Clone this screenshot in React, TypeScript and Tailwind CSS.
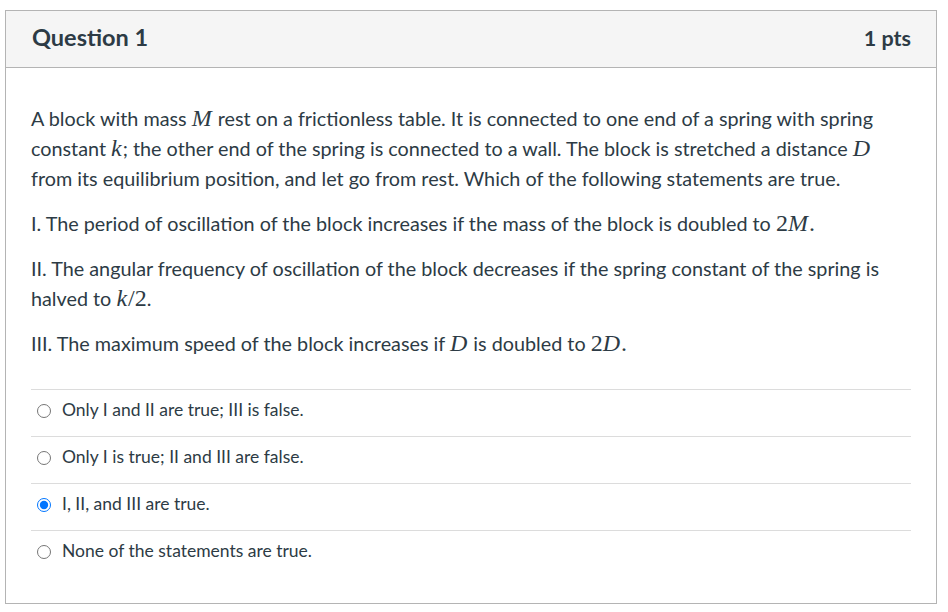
import React from 'react';

const answers = [
  { id: 'a', text: 'Only I and II are true; III is false.' },
  { id: 'b', text: 'Only I is true; II and III are false.' },
  { id: 'c', text: 'I, II, and III are true.', checked: true },
  { id: 'd', text: 'None of the statements are true.' }
];

// math bits, KaTeX-ish serif
function M({ children }: { children: React.ReactNode }) {
  return <span className="font-['Liberation_Serif',serif] italic text-[24px] leading-none pr-[1px]">{children}</span>;
}

function N({ children }: { children: React.ReactNode }) {
  return <span className="font-['Liberation_Serif',serif] text-[24px] leading-none">{children}</span>;
}

export default function App() {
  return (
    <div className="w-[948px] h-[612px] bg-white pt-[10px] pl-[5px] font-['Lato',sans-serif] text-[#2d3b45]">
      <div className="w-[932px] h-[594px] border border-[#b4b4b4]">
        <div className="flex h-[57px] items-center justify-between border-b border-[#b4b4b4] bg-[#f5f5f5] pb-[2px] pl-[26px] pr-[25px]">
          <h2 className="text-[23.5px] font-bold">Question 1</h2>
          <span className="text-[21.5px] font-bold">1 pts</span>
        </div>

        <div className="px-[25px] pt-[35px]">
          <div className="space-y-[15px] text-[19.8px] leading-[30px]">
            <p>
              A block with mass <M>M</M> rest on a frictionless table. It is connected to one end of a spring with spring
              constant <M>k</M>; the other end of the spring is connected to a wall. The block is stretched a distance <M>D</M>{' '}
              from its equilibrium position, and let go from rest. Which of the following statements are true.
            </p>
            <p>
              I. The period of oscillation of the block increases if the mass of the block is doubled to <N>2</N>
              <M>M</M>
              <N>.</N>
            </p>
            <p>
              II. The angular frequency of oscillation of the block decreases if the spring constant of the spring is
              halved to <M>k</M>
              <N>/2</N>.
            </p>
            <p>
              III. The maximum speed of the block increases if <M>D</M> is doubled to <N>2</N>
              <M>D</M>
              <N>.</N>
            </p>
          </div>

          <div className="mt-[31px]">
            {answers.map((a) => (
              <label key={a.id} className="flex h-[47px] items-center gap-[11px] border-t border-[#dcdcdc] pl-[6px] pb-[5px] text-[17.5px]">
                <input type="radio" name="q1" defaultChecked={a.checked} className="m-0 h-[14px] w-[14px]" />
                <span>{a.text}</span>
              </label>
            ))}
          </div>
        </div>
      </div>
    </div>
  );
}
